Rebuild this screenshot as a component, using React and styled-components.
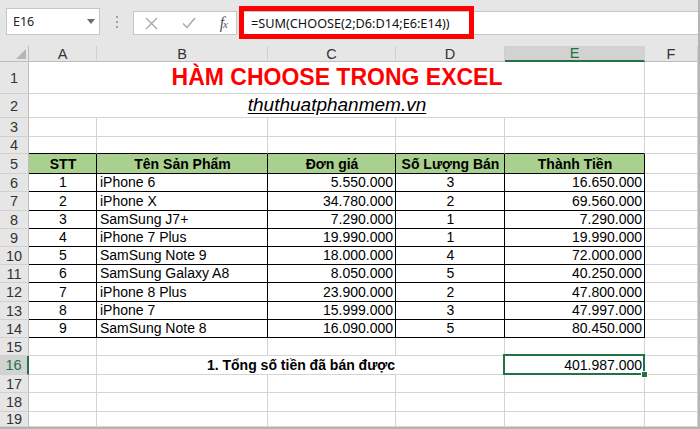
import React from 'react'
import styled, { createGlobalStyle, css } from 'styled-components'

const GlobalStyle = createGlobalStyle`
  html, body {
    margin: 0;
    padding: 0;
    background: #ffffff;
  }
  body {
    font-family: 'Liberation Sans', Arial, sans-serif;
  }
`

const Window = styled.div`
  width: 700px;
  height: 429px;
  box-sizing: border-box;
  overflow: hidden;
  display: flex;
  flex-direction: column;
  background: #e6e6e6;
  border-right: 2px solid #b4b4b4;
  border-bottom: 2px solid #b4b4b4;
`

const FormulaBar = styled.div`
  position: relative;
  flex: 0 0 46px;
  display: flex;
  align-items: flex-start;
  padding-left: 6px;
  font-family: 'Noto Sans', 'Open Sans', sans-serif;
`

const NameBox = styled.div`
  margin-top: 8px;
  width: 94px;
  height: 27px;
  box-sizing: border-box;
  display: flex;
  align-items: center;
  justify-content: space-between;
  padding: 0 4px 0 6px;
  background: #fff;
  border: 1px solid #c6c6c6;
  font-size: 12.5px;
  color: #222;
`

const Caret = styled.span`
  width: 0;
  height: 0;
  border-left: 4px solid transparent;
  border-right: 4px solid transparent;
  border-top: 5px solid #6b6b6b;
`

const Grip = styled.div`
  margin-top: 16px;
  width: 33px;
  display: flex;
  flex-direction: column;
  align-items: center;
  gap: 3px;
`

const Dot = styled.span`
  width: 2px;
  height: 2px;
  background: #a0a0a0;
`

const FxBox = styled.div`
  margin-top: 11px;
  width: 104px;
  height: 24px;
  box-sizing: border-box;
  display: flex;
  align-items: center;
  justify-content: space-between;
  padding: 0 9px 0 11px;
  background: #fff;
  border: 1px solid #c6c6c6;
`

const Fx = styled.span`
  font-family: 'Liberation Serif', 'DejaVu Serif', serif;
  font-style: italic;
  font-size: 16px;
  color: #555;
  letter-spacing: -1px;

  small {
    font-size: 11px;
  }
`

const FormulaInput = styled.div`
  margin-top: 11px;
  margin-left: 2px;
  flex: 1;
  height: 24px;
  box-sizing: border-box;
  display: flex;
  align-items: center;
  padding-left: 11px;
  background: #fff;
  border: 1px solid #c6c6c6;
  border-right: none;
  font-size: 12.7px;
  color: #111;
`

const Highlight = styled.div`
  position: absolute;
  left: 239px;
  top: 6px;
  width: 235px;
  height: 33px;
  box-sizing: border-box;
  border: 5px solid #ff0000;
`

const Sheet = styled.div`
  flex: 1;
  overflow: hidden;
  display: grid;
  grid-template-columns: 29px 68px 171px 128px 109px 140px 1fr;
  grid-template-rows:
    16px 32px 24px 19px 17px 20px
    18px 19px 18px 18px 18px 18px 19px 18px 18px
    18px 19px 18px 19px 15px;
  background: #fff;
`

const Corner = styled.div`
  box-sizing: border-box;
  display: flex;
  justify-content: flex-end;
  align-items: flex-end;
  padding: 0 2px 2px 0;
  background: #e6e6e6;
  border-right: 1px solid #bdbdbd;
  border-bottom: 1px solid #bdbdbd;
`

const CornerMark = styled.span`
  width: 0;
  height: 0;
  border-left: 10px solid transparent;
  border-bottom: 10px solid #b5b5b5;
`

const ColHead = styled.div`
  box-sizing: border-box;
  display: flex;
  align-items: center;
  justify-content: center;
  font-size: 14.5px;
  line-height: 14px;
  color: #333;
  background: #e6e6e6;
  border-right: 1px solid #cfcfcf;
  border-bottom: 1px solid #bdbdbd;

  ${({ $active }) =>
    $active &&
    css`
      background: #d2d2d2;
      color: #217346;
      border-bottom: 2px solid #217346;
    `}
`

const RowHead = styled.div`
  box-sizing: border-box;
  display: flex;
  align-items: center;
  justify-content: center;
  padding-top: 1px;
  font-size: 14.5px;
  line-height: 13px;
  color: #333;
  background: #e6e6e6;
  border-right: 1px solid #bdbdbd;
  border-bottom: 1px solid #d0d0d0;

  ${({ $active }) =>
    $active &&
    css`
      background: #d2d2d2;
      color: #217346;
      border-right: 2px solid #217346;
    `}
`

const justify = { left: 'flex-start', center: 'center', right: 'flex-end' }

const Cell = styled.div`
  position: relative;
  box-sizing: border-box;
  display: flex;
  align-items: flex-end;
  justify-content: ${({ $align = 'left' }) => justify[$align]};
  padding: 0 2px 1px 3px;
  grid-column: span ${({ $span = 1 }) => $span};
  font-size: 14px;
  line-height: 16px;
  color: #000;
  white-space: nowrap;
  font-weight: ${({ $bold }) => ($bold ? 700 : 400)};
  background: ${({ $fill }) => $fill || '#fff'};
  border-right: 1px solid ${({ $boxed }) => ($boxed ? '#000' : '#d4d4d4')};
  border-bottom: 1px solid
    ${({ $boxed, $above }) => ($boxed || $above ? '#000' : '#d4d4d4')};

  ${({ $selected }) =>
    $selected &&
    css`
      z-index: 1;
      &::after {
        content: '';
        position: absolute;
        left: -2px;
        top: -2px;
        right: -1px;
        bottom: -1px;
        border: 2px solid #217346;
      }
      &::before {
        content: '';
        position: absolute;
        right: -4px;
        bottom: -4px;
        width: 5px;
        height: 5px;
        background: #217346;
        border: 1px solid #fff;
        z-index: 2;
      }
    `}
`

const Title = styled.span`
  font-size: 23px;
  line-height: 26px;
  font-weight: 700;
  color: #ff0000;
  padding-bottom: 2px;
`

const Site = styled.span`
  font-size: 19px;
  line-height: 22px;
  font-style: italic;
  text-decoration: underline;
  text-underline-offset: 2px;
`

const columns = ['A', 'B', 'C', 'D', 'E', 'F']

const products = [
  ['1', 'iPhone 6', '5.550.000', '3', '16.650.000'],
  ['2', 'iPhone X', '34.780.000', '2', '69.560.000'],
  ['3', 'SamSung J7+', '7.290.000', '1', '7.290.000'],
  ['4', 'iPhone 7 Plus', '19.990.000', '1', '19.990.000'],
  ['5', 'SamSung Note 9', '18.000.000', '4', '72.000.000'],
  ['6', 'SamSung Galaxy A8', '8.050.000', '5', '40.250.000'],
  ['7', 'iPhone 8 Plus', '23.900.000', '2', '47.800.000'],
  ['8', 'iPhone 7', '15.999.000', '3', '47.997.000'],
  ['9', 'SamSung Note 8', '16.090.000', '5', '80.450.000'],
]

const headers = ['STT', 'Tên Sản Phẩm', 'Đơn giá', 'Số Lượng Bán', 'Thành Tiền']
const align = ['center', 'left', 'right', 'center', 'right']

function EmptyRow({ n, above }) {
  return (
    <>
      <RowHead>{n}</RowHead>
      {columns.map((c, i) => (
        <Cell key={c} $above={above && i < 5} />
      ))}
    </>
  )
}

function CrossIcon() {
  return (
    <svg width="13" height="13" viewBox="0 0 13 13">
      <path d="M1 1L12 12M12 1L1 12" stroke="#a6a6a6" strokeWidth="1.3" fill="none" />
    </svg>
  )
}

function CheckIcon() {
  return (
    <svg width="14" height="12" viewBox="0 0 14 12">
      <path d="M1 6.5L5 10.5L13 1" stroke="#a6a6a6" strokeWidth="1.4" fill="none" />
    </svg>
  )
}

export default function App() {
  return (
    <Window>
      <GlobalStyle />
      <FormulaBar>
        <NameBox>
          E16
          <Caret />
        </NameBox>
        <Grip>
          <Dot />
          <Dot />
          <Dot />
        </Grip>
        <FxBox>
          <CrossIcon />
          <CheckIcon />
          <Fx>
            f<small>x</small>
          </Fx>
        </FxBox>
        <FormulaInput>=SUM(CHOOSE(2;D6:D14;E6:E14))</FormulaInput>
        <Highlight />
      </FormulaBar>

      <Sheet>
        <Corner>
          <CornerMark />
        </Corner>
        {columns.map((c) => (
          <ColHead key={c} $active={c === 'E'}>
            {c}
          </ColHead>
        ))}

        <RowHead>1</RowHead>
        <Cell $span={5} $align="center">
          <Title>HÀM CHOOSE TRONG EXCEL</Title>
        </Cell>
        <Cell />

        <RowHead>2</RowHead>
        <Cell $span={5} $align="center">
          <Site>thuthuatphanmem.vn</Site>
        </Cell>
        <Cell />

        <EmptyRow n={3} />
        <EmptyRow n={4} above />

        <RowHead>5</RowHead>
        {headers.map((h) => (
          <Cell key={h} $boxed $bold $align="center" $fill="#a9d08e">
            {h}
          </Cell>
        ))}
        <Cell />

        {products.map((row, r) => (
          <React.Fragment key={row[0]}>
            <RowHead>{r + 6}</RowHead>
            {row.map((v, i) => (
              <Cell key={i} $boxed $align={align[i]}>
                {v}
              </Cell>
            ))}
            <Cell />
          </React.Fragment>
        ))}

        <EmptyRow n={15} />

        <RowHead $active>16</RowHead>
        <Cell />
        <Cell $span={3} $bold $align="center">
          1. Tổng số tiền đã bán được
        </Cell>
        <Cell $align="right" $selected>
          401.987.000
        </Cell>
        <Cell />

        <EmptyRow n={17} />
        <EmptyRow n={18} />
        <EmptyRow n={19} />
      </Sheet>
    </Window>
  )
}
